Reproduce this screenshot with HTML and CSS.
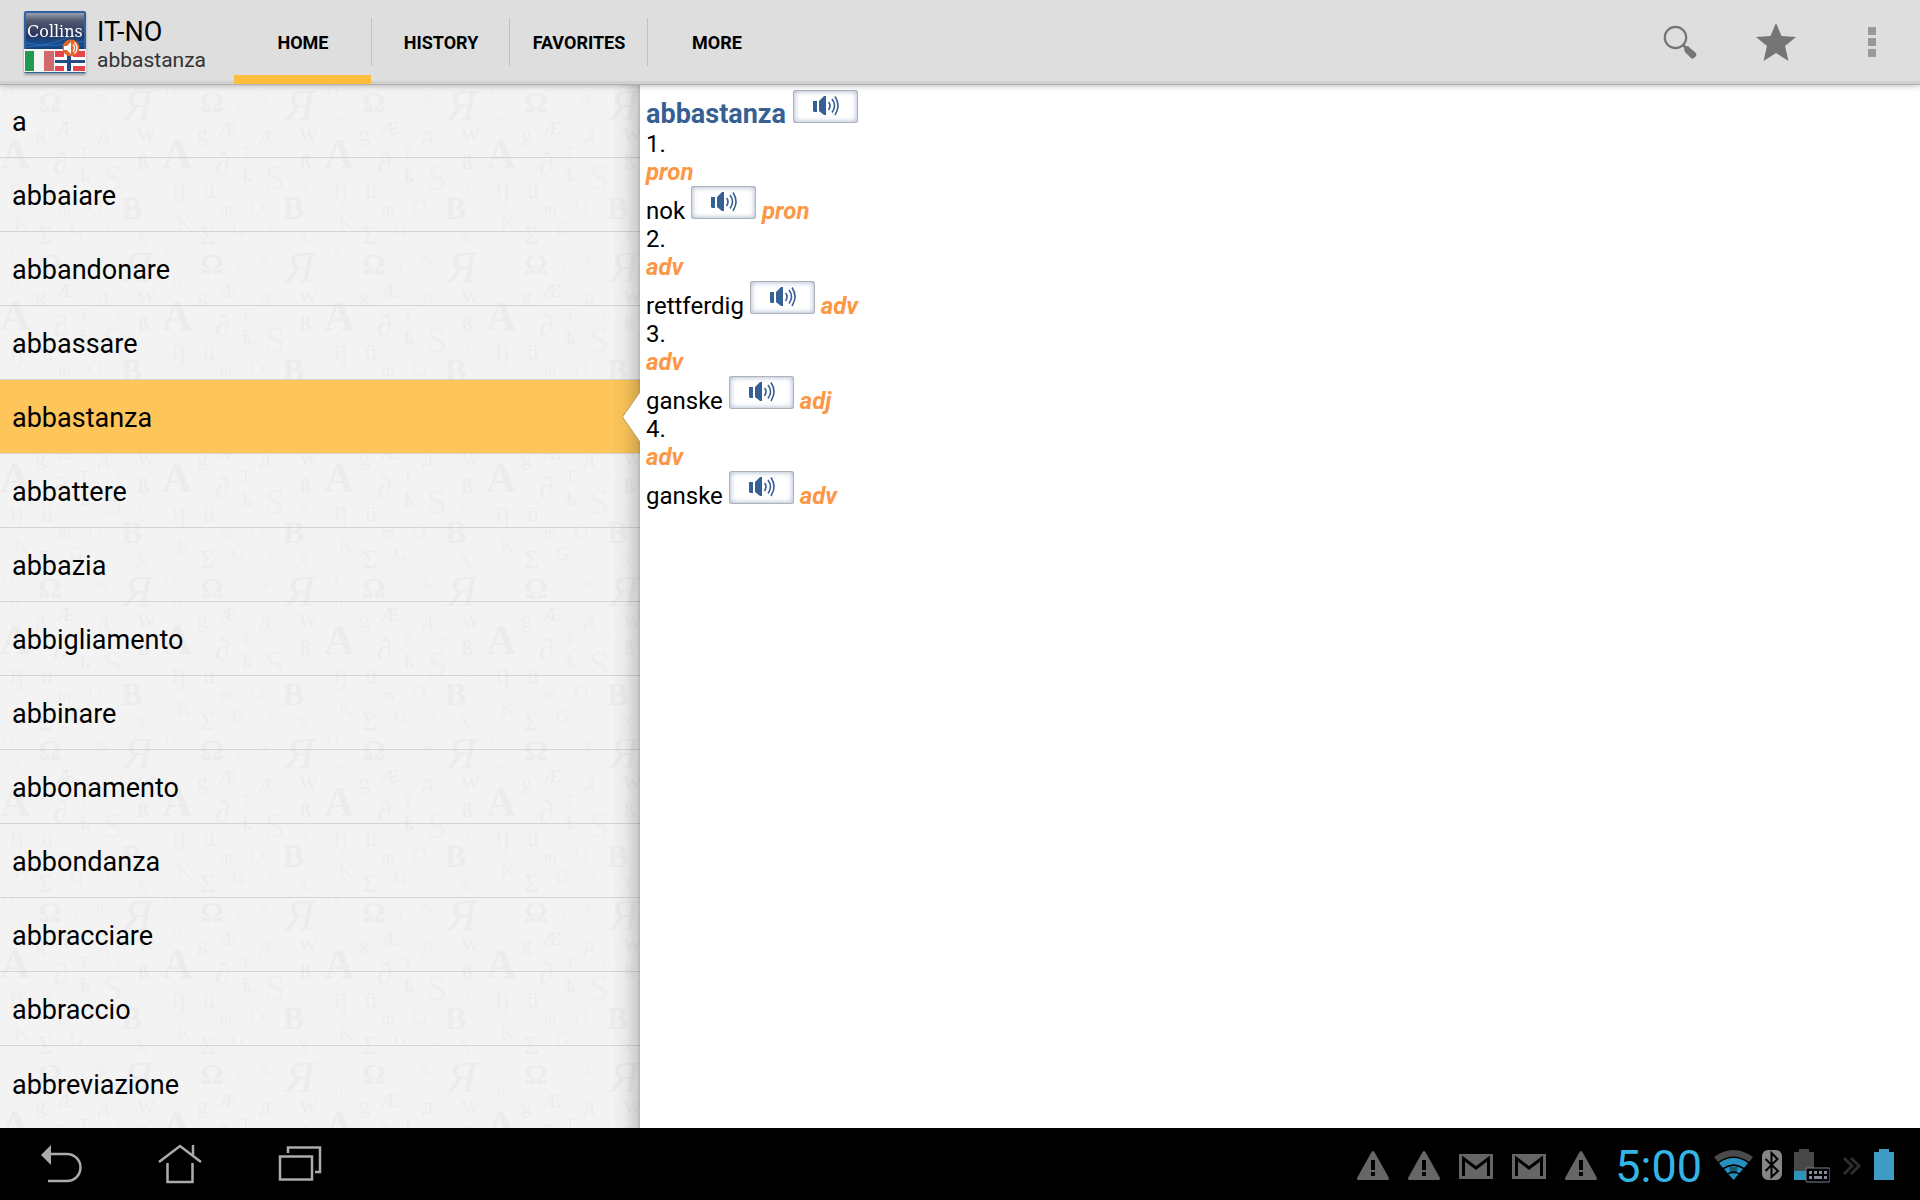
FILE: index.html
```html
<!DOCTYPE html>
<html lang="en">
<head>
<meta charset="utf-8">
<meta name="viewport" content="width=device-width, initial-scale=1">
<title>IT-NO – abbastanza</title>
<link rel="stylesheet" href="styles.css">
</head>
<body>
<svg class="defs" width="0" height="0" aria-hidden="true">
  <symbol id="speaker" viewBox="-20 -6 65 33">
    <path fill="#365f94" d="M0 5h4v11H1l-1-1zM6 5l5-5h2v19h-2l-5-4z"/>
    <path fill="none" stroke="#365f94" stroke-width="1.6" d="M15.500 6q3 3.500 0 8M19 3q5 6.500 0 13.500M22 .500q6 9 0 18.500"/>
  </symbol>
  <symbol id="warning" viewBox="0 0 32 40">
    <path fill="#666765" d="M16 7q1 0 2 2l14 25q0 2-1 2H1q-1 0-1-2L14 9q1-2 2-2z"/>
    <path fill="#000" d="M14 16h4v10h-4zM14 28h4v4h-4z"/>
  </symbol>
  <symbol id="mail" viewBox="0 0 34 40">
    <path fill="#666765" d="M0 10h34v25H0z"/>
    <path fill="none" stroke="#000" stroke-width="3" d="M4.500 32V14.500L17 24l12.500-9.500V32"/>
  </symbol>
</svg>

<header class="topbar">
  <div class="brand">
    <svg class="logo" viewBox="0 0 62 62" role="img" aria-label="Collins">
      <defs>
        <linearGradient id="sky" x1="0" y1="0" x2="0" y2="1">
          <stop offset="0" stop-color="#9aa0ae"/><stop offset=".2" stop-color="#535a70"/>
          <stop offset=".6" stop-color="#26355c"/><stop offset=".85" stop-color="#12529a"/><stop offset="1" stop-color="#173a6c"/>
        </linearGradient>
      </defs>
      <rect width="62" height="62" rx="2" fill="#2d63a0"/>
      <rect x="2" y="2" width="58" height="37" fill="url(#sky)"/>
      <path d="M2 36Q25 36 60 20M2 32Q30 38 60 30" stroke="#3f7cc0" fill="none" opacity=".6"/>
      <path fill="#f4f4f4" d="M0 38h62v23H0z"/>
      <path fill="#1f9a50" d="M1 40h9v20H1z"/>
      <path fill="#d0686d" d="M20 40h10v20H20z"/>
      <path fill="#e8444e" d="M31 40h30v20H31z"/>
      <path fill="#fff" d="M40 40h9v20h-9zM31 46h30v9H31z"/>
      <path fill="#264a86" d="M43 40h4v20h-4zM31 49h30v3H31z"/>
      <text class="logo-name" x="3" y="26">Collins</text>
      <circle cx="47" cy="37" r="8.500" fill="#e3662b"/>
      <path fill="#fff" d="M40 35h3l4-4v12l-4-4h-3z"/>
      <path fill="none" stroke="#fff" stroke-width="1.300" d="M49 33.500q3 3.500 0 7M50.500 31.500q5 5.500 0 11"/>
    </svg>
    <div class="titles">
      <h1 class="app-title">IT-NO</h1>
      <p class="app-subtitle">abbastanza</p>
    </div>
  </div>
  <nav class="tabs">
    <a class="tab active" href="#home">HOME</a>
    <a class="tab" href="#history">HISTORY</a>
    <a class="tab" href="#favorites">FAVORITES</a>
    <a class="tab" href="#more">MORE</a>
  </nav>
  <div class="actions">
    <button class="action" type="button" aria-label="Search">
      <svg width="40" height="40" viewBox="0 0 40 40"><circle cx="15.500" cy="15.500" r="10.700" fill="none" stroke="#757575" stroke-width="2.200"/><path d="M23 23l3 3" stroke="#757575" stroke-width="2.500"/><path fill="#757575" d="M24 27q0-2 3-3 2 0 3 2l6 5q1 2 0 3l-2 2q-2 1-3 0l-6-6z"/></svg>
    </button>
    <button class="action" type="button" aria-label="Favorite">
      <svg width="40" height="40" viewBox="0 0 40 40"><path fill="#757575" d="M20 1l5.500 13L40 15 29 24l3.500 15L20 31 7.500 39 11 24 0 15l14.500-1z"/></svg>
    </button>
    <button class="action" type="button" aria-label="More options">
      <svg width="40" height="40" viewBox="0 0 40 40"><path fill="#999" d="M16 5h8v8h-8zM16 16h8v8h-8zM16 27h8v8h-8z"/></svg>
    </button>
  </div>
</header>

<main class="content">
  <nav class="words" aria-label="Words">
    <svg class="letters" aria-hidden="true">
      <pattern id="glyphs" width="162" height="162" patternUnits="userSpaceOnUse">
        <text x="38" y="28" font-size="30" font-weight="bold">Ω</text>
        <text x="75" y="28" font-size="16" opacity=".5">C</text>
        <text x="95" y="19" font-size="18" opacity=".8">љ</text>
        <text x="123" y="36" font-size="45" font-style="italic">Я</text>
        <text x="3" y="14" font-size="16" opacity=".6">Ö</text>
        <text x="10" y="40" font-size="18" opacity=".5">н</text>
        <text x="35" y="57" font-size="22">g</text>
        <text x="57" y="51" font-size="18" font-weight="bold">Æ</text>
        <text x="98" y="57" font-size="22">д</text>
        <text x="137" y="57" font-size="26">w</text>
        <text x="0" y="84" font-size="42" font-weight="bold">A</text>
        <text x="53" y="90" font-size="30">∂</text>
        <text x="79" y="74" font-size="16">T</text>
        <text x="116" y="74" font-size="18" font-style="italic" opacity=".6">e</text>
        <text x="138" y="85" font-size="20" font-weight="bold">ß</text>
        <text x="9" y="114" font-size="32" opacity=".7">ŋ</text>
        <text x="41" y="114" font-size="24">ü</text>
        <text x="79" y="98" font-size="18" font-weight="bold">ѣ</text>
        <text x="103" y="106" font-size="36" opacity=".7">S</text>
        <text x="138" y="104" font-size="16" opacity=".5">q</text>
        <text x="58" y="130" font-size="16">m</text>
        <text x="88" y="130" font-size="20" opacity=".8">O</text>
        <text x="121" y="135" font-size="32" font-weight="bold">B</text>
        <text x="14" y="146" font-size="22" opacity=".8">K</text>
        <text x="38" y="160" font-size="26">Σ</text>
        <text x="70" y="152" font-size="18">G</text>
        <text x="106" y="150" font-size="18" opacity=".5">ζ</text>
        <text x="135" y="159" font-size="18" opacity=".8">X</text>
      </pattern>
      <rect width="100%" height="100%" fill="url(#glyphs)"/>
    </svg>
    <ul class="word-list">
      <li><a href="#a">a</a></li>
      <li><a href="#abbaiare">abbaiare</a></li>
      <li><a href="#abbandonare">abbandonare</a></li>
      <li><a href="#abbassare">abbassare</a></li>
      <li class="selected"><a href="#abbastanza" aria-current="true">abbastanza</a>
        <svg class="pointer" width="18" height="50" viewBox="0 0 18 50" aria-hidden="true"><path fill="#fff" d="M18 0L.500 25 18 50z"/><path fill="none" stroke="#b99b62" stroke-width="1" d="M18 0L.500 25 18 50"/></svg>
      </li>
      <li><a href="#abbattere">abbattere</a></li>
      <li><a href="#abbazia">abbazia</a></li>
      <li><a href="#abbigliamento">abbigliamento</a></li>
      <li><a href="#abbinare">abbinare</a></li>
      <li><a href="#abbonamento">abbonamento</a></li>
      <li><a href="#abbondanza">abbondanza</a></li>
      <li><a href="#abbracciare">abbracciare</a></li>
      <li><a href="#abbraccio">abbraccio</a></li>
      <li><a href="#abbreviazione">abbreviazione</a></li>
    </ul>
  </nav>

  <article class="entry">
    <h2>abbastanza <button class="say" type="button" aria-label="Listen to abbastanza"><svg width="65" height="33"><use href="#speaker"/></svg></button></h2>
    <p>1.</p>
    <p><i>pron</i></p>
    <p>nok <button class="say" type="button" aria-label="Listen to nok"><svg width="65" height="33"><use href="#speaker"/></svg></button> <i>pron</i></p>
    <p>2.</p>
    <p><i>adv</i></p>
    <p>rettferdig <button class="say" type="button" aria-label="Listen to rettferdig"><svg width="65" height="33"><use href="#speaker"/></svg></button> <i>adv</i></p>
    <p>3.</p>
    <p><i>adv</i></p>
    <p>ganske <button class="say" type="button" aria-label="Listen to ganske"><svg width="65" height="33"><use href="#speaker"/></svg></button> <i>adj</i></p>
    <p>4.</p>
    <p><i>adv</i></p>
    <p>ganske <button class="say" type="button" aria-label="Listen to ganske"><svg width="65" height="33"><use href="#speaker"/></svg></button> <i>adv</i></p>
  </article>
</main>

<footer class="systembar">
  <div class="nav-keys">
    <button class="key" type="button" aria-label="Back">
      <svg width="44" height="44" viewBox="0 4 44 44"><path fill="#a9ada7" d="M3 17L13 7v20z"/><path fill="none" stroke="#a9ada7" stroke-width="2.500" d="M12 16h17a13.500 13.500 0 0 1 0 27H10"/></svg>
    </button>
    <button class="key" type="button" aria-label="Home">
      <svg width="44" height="44" viewBox="0 4 44 44"><path fill="none" stroke="#a9ada7" stroke-width="2.500" d="M1 24L22 8l21 16M35 7v11M9.500 25v19h25V25"/></svg>
    </button>
    <button class="key" type="button" aria-label="Recent apps">
      <svg width="44" height="44" viewBox="0 4 44 44"><path fill="none" stroke="#a9ada7" stroke-width="2.500" d="M2 18.500h32v23H2zM10 15V9.500h32V34h-5"/></svg>
    </button>
  </div>
  <div class="status">
    <div class="notices">
      <svg width="32" height="40"><use href="#warning"/></svg>
      <svg width="32" height="40"><use href="#warning"/></svg>
      <svg width="34" height="40"><use href="#mail"/></svg>
      <svg width="34" height="40"><use href="#mail"/></svg>
      <svg width="32" height="40"><use href="#warning"/></svg>
    </div>
    <time class="clock">5:00</time>
    <svg class="wifi" width="36" height="40" viewBox="0 0 36 40">
      <path fill="#4a4a4a" d="M0 13q19.500-14 39 0l-4 5q-15.500-11-31 0z"/>
      <path fill="#2691c0" d="M5 19q14.500-10 29 0l-4 5q-10.500-7-21 0z"/>
      <path fill="#2691c0" d="M10 25q9.500-6 19 0L19.500 36z"/>
      <path fill="#135b79" d="M15 23l9 0-2 7h-5z"/>
      <path fill="none" stroke="#000" stroke-width="1.500" d="M9 24.500q10.500-7 21 0M13.500 30q6-4 12 0"/>
    </svg>
    <svg width="20" height="40" viewBox="0 0 20 40">
      <rect y="6" width="20" height="30" rx="6" fill="#858585"/>
      <path fill="none" stroke="#000" stroke-width="2" d="M3.500 15L16 27l-6.500 6V9l6 6L3.500 27"/>
    </svg>
    <svg width="36" height="40" viewBox="0 0 36 40">
      <path fill="#484848" d="M0 8h5V5h10v3h5v19H0z"/>
      <path fill="#2f92ba" d="M0 27h12v9H0z"/>
      <rect x="12" y="24" width="24" height="14" rx="1" fill="#000" stroke="#7b8193"/>
      <path stroke="#858a9c" stroke-width="3" stroke-dasharray="3 2" d="M15 28.500h19"/>
      <path stroke="#858a9c" stroke-width="3" d="M15 33.500h3M20 33.500h8M30 33.500h3"/>
    </svg>
    <svg width="20" height="40" viewBox="0 0 20 40"><path fill="none" stroke="#2d2d2d" stroke-width="3" d="M2 14l8 8-8 8M9 14l8 8-8 8"/></svg>
    <svg width="20" height="40" viewBox="0 0 20 40"><path fill="#3e9cc4" d="M0 8h5V5h10v3h5v28H0z"/></svg>
  </div>
</footer>
</body>
</html>
```
FILE: styles.css
```css
* {
  box-sizing: border-box;
}

body {
  margin: 0;
  min-height: 100vh;
  display: flex;
  flex-direction: column;
  font-family: Roboto, sans-serif;
  color: #000;
  background: #fff;
}

h1, h2, p, ul {
  margin: 0;
  padding: 0;
}

a {
  color: inherit;
  text-decoration: none;
}

button {
  padding: 0;
  border: 0;
  background: none;
}

svg {
  display: block;
  flex: none;
}

.defs {
  position: absolute;
}

/* Top bar */
.topbar {
  position: relative;
  z-index: 2;
  display: flex;
  height: 84px;
  background: #dedede;
  box-shadow: inset 0 -3px #d1d1d1, 0 1px #b0b0b0, 0 2px 6px rgba(0, 0, 0, .25);
}

.brand {
  display: flex;
  align-items: center;
  gap: 11px;
  width: 234px;
  padding-left: 24px;
}

.logo {
  width: 62px;
  height: 62px;
  filter: drop-shadow(0 2px 1px rgba(0, 0, 0, .3));
}

.logo-name {
  font: 16px "DejaVu Serif", serif;
  fill: #fff;
}

.titles {
  padding-top: 3px;
}

.app-title {
  font-size: 27px;
  line-height: 32px;
  font-weight: 400;
}

.app-subtitle {
  font-size: 21px;
  line-height: 24px;
  color: #333;
}

.tabs {
  display: flex;
}

.tab {
  position: relative;
  display: flex;
  align-items: center;
  justify-content: center;
  width: 138px;
  font-size: 18px;
  font-weight: 700;
}

.tab + .tab::before {
  content: "";
  position: absolute;
  left: -1px;
  top: 18px;
  bottom: 18px;
  width: 1px;
  background: #c2c2c2;
}

.tab.active::after {
  content: "";
  position: absolute;
  left: 0;
  right: 1px;
  bottom: 0;
  height: 9px;
  background: #ffbd3f;
}

.actions {
  display: flex;
  margin-left: auto;
}

.action {
  display: flex;
  align-items: center;
  justify-content: center;
  width: 96px;
}

/* Word list */
.content {
  flex: 1;
  display: grid;
  grid-template-columns: 1fr 2fr;
}

.words {
  position: relative;
  display: flex;
  background: #f3f3f3;
}

.words::after {
  content: "";
  position: absolute;
  top: 0;
  right: 0;
  bottom: 0;
  width: 26px;
  border-right: 2px solid rgba(0, 0, 0, .22);
  background: linear-gradient(to right, transparent, rgba(0, 0, 0, .04) 50%, rgba(0, 0, 0, .16));
  pointer-events: none;
}

.letters {
  position: absolute;
  width: 100%;
  height: 100%;
  font-family: "Liberation Serif", "DejaVu Serif", serif;
  fill: #ececec;
}

.word-list {
  position: relative;
  flex: 1;
  list-style: none;
  font-size: 27px;
}

.word-list li {
  height: 74px;
  border-bottom: 1px solid #d4d4d4;
}

.word-list li:last-child {
  border-bottom: 0;
}

.word-list a {
  display: flex;
  align-items: center;
  height: 100%;
  padding: 3px 0 0 12px;
}

.word-list .selected {
  position: relative;
  background: #fdc55a;
}

.pointer {
  position: absolute;
  right: 0;
  top: 12px;
  z-index: 1;
}

/* Dictionary entry */
.entry {
  padding: 6px;
  font-size: 24px;
}

.entry h2 {
  font-size: 27px;
  font-weight: 700;
  color: #365f94;
}

.entry i {
  font-weight: 700;
  color: #fb9746;
}

.say {
  display: inline-flex;
  width: 65px;
  height: 33px;
  border-radius: 3px;
  background: #fff;
  box-shadow: inset 0 0 0 1px #aeb3bb, inset 0 0 5px 2px #b9c4d6;
  vertical-align: baseline;
}

/* System bar */
.systembar {
  display: flex;
  justify-content: space-between;
  align-items: center;
  height: 72px;
  padding-right: 26px;
  background: #000;
}

.nav-keys {
  display: flex;
}

.key {
  display: flex;
  align-items: center;
  justify-content: center;
  width: 120px;
  height: 72px;
}

.status {
  display: flex;
  align-items: center;
  gap: 12px;
}

.notices {
  display: flex;
  gap: 19px;
  margin-right: 6px;
}

.clock {
  padding-top: 4px;
  font-size: 45px;
  color: #33b5e5;
}

.wifi {
  overflow: visible;
}
```
